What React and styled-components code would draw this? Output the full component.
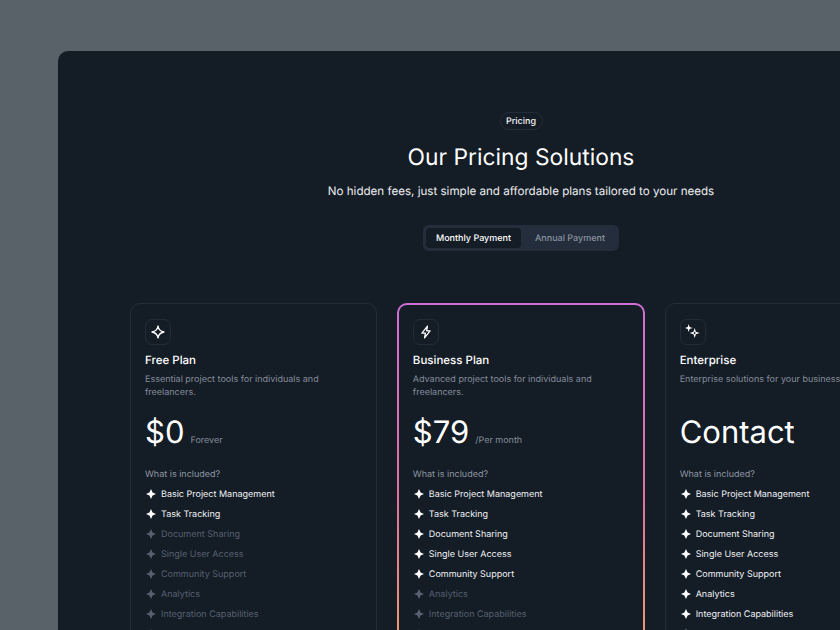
import React from "react";
import styled, { createGlobalStyle } from "styled-components";

const GlobalStyle = createGlobalStyle`
  html, body {
    margin: 0;
    height: 100%;
    overflow: hidden;
    background: #5a6269;
    font-family: "Inter", "Liberation Sans", sans-serif;
    text-rendering: geometricPrecision;
  }
`;

const plans = [
  {
    name: "Free Plan",
    icon: "star",
    desc: "Essential project tools for individuals and freelancers.",
    price: "$0",
    unit: "Forever",
    active: 2,
  },
  {
    name: "Business Plan",
    icon: "zap",
    desc: "Advanced project tools for individuals and freelancers.",
    price: "$79",
    unit: "/Per month",
    active: 5,
    featured: true,
  },
  {
    name: "Enterprise",
    icon: "sparkles",
    desc: "Enterprise solutions for your business needs.",
    price: "Contact",
    active: 8,
  },
];

const features = [
  "Basic Project Management",
  "Task Tracking",
  "Document Sharing",
  "Single User Access",
  "Community Support",
  "Analytics",
  "Integration Capabilities",
  "Priority Support",
];

const PlanIcon = ({ type }) => {
  if (type === "zap") {
    return (
      <svg width="14" height="14" viewBox="0 0 24 24" fill="none" stroke="#fff" strokeWidth="2.2" strokeLinejoin="round">
        <path d="M14.500 2 5 14h6l-1.500 8L19 10h-6l1.500-8z" />
      </svg>
    );
  }
  if (type === "sparkles") {
    return (
      <svg width="16" height="16" viewBox="0 0 24 24" fill="#fff">
        <path d="M5.500 0 6.900 4.600 11.500 6 6.900 7.400 5.500 12 4.100 7.400 -.5 6 4.100 4.600z" />
        <path fillRule="evenodd" d="M14.500 6 16.300 11.700 22 13.500 16.300 15.300 14.500 21 12.700 15.300 7 13.500 12.700 11.700z M14.500 11.400 13.700 12.700 12.400 13.500 13.700 14.300 14.500 15.600 15.300 14.300 16.600 13.500 15.300 12.700z" />
      </svg>
    );
  }
  return (
    <svg width="16" height="16" viewBox="0 0 24 24" fill="none" stroke="#fff" strokeWidth="2" strokeLinejoin="round">
      <path d="M12 3c.8 4.800 4.200 8.200 9 9-4.800.8-8.200 4.200-9 9-.8-4.800-4.200-8.200-9-9 4.800-.8 8.200-4.200 9-9z" />
    </svg>
  );
};

const Bullet = ({ on }) => (
  <svg width="10" height="10" viewBox="0 0 10 10" fill={on ? "#fff" : "#566070"}>
    <path d="M5 0 6.600 3.400 10 5 6.600 6.600 5 10 3.400 6.600 0 5 3.400 3.400z" />
  </svg>
);

const App = () => (
  <Backdrop>
    <GlobalStyle />
    <Panel>
      <Header>
        <Badge>Pricing</Badge>
        <Title>Our Pricing Solutions</Title>
        <Subtitle>No hidden fees, just simple and affordable plans tailored to your needs</Subtitle>
        <Toggle>
          <ToggleOption $selected>Monthly Payment</ToggleOption>
          <ToggleOption>Annual Payment</ToggleOption>
        </Toggle>
      </Header>
      <Cards>
        {plans.map((plan) => (
          <Card key={plan.name} $featured={plan.featured}>
            <IconBox>
              <PlanIcon type={plan.icon} />
            </IconBox>
            <PlanName>{plan.name}</PlanName>
            <PlanDesc>{plan.desc}</PlanDesc>
            <PriceRow>
              <Price>{plan.price}</Price>
              {plan.unit && <Unit>{plan.unit}</Unit>}
            </PriceRow>
            <Included>What is included?</Included>
            <FeatureList>
              {features.map((f, i) => (
                <Feature key={f} $on={i < plan.active}>
                  <Bullet on={i < plan.active} />
                  {f}
                </Feature>
              ))}
            </FeatureList>
          </Card>
        ))}
      </Cards>
    </Panel>
  </Backdrop>
);

const Backdrop = styled.div`
  width: 840px;
  height: 630px;
  overflow: hidden;
  padding: 51px 0 0 58px;
  box-sizing: border-box;
  background: #5a6269;
`;

const Panel = styled.main`
  width: 926px;
  min-height: 700px;
  box-sizing: border-box;
  padding: 61px 72px 40px;
  background: #141c26;
  border-radius: 10px;
`;

const Header = styled.header`
  display: flex;
  flex-direction: column;
  align-items: center;
`;

const Badge = styled.div`
  height: 18px;
  box-sizing: border-box;
  width: 43px;
  display: flex;
  align-items: center;
  justify-content: center;
  font-size: 9px;
  font-weight: 500;
  color: #f4f5f7;
  border: 1px solid #232d3a;
  border-radius: 9px;
`;

const Title = styled.h1`
  margin: 13px 0 0;
  font-size: 22.800px;
  line-height: 30px;
  font-weight: 400;
  color: #fff;
`;

const Subtitle = styled.p`
  margin: 9px 0 0;
  font-size: 11.600px;
  line-height: 18px;
  color: #eceef0;
`;

const Toggle = styled.div`
  display: flex;
  margin-top: 25px;
  padding: 3px;
  background: #232d3b;
  border-radius: 6px;
`;

const ToggleOption = styled.div`
  width: 95px;
  height: 20px;
  box-sizing: border-box;
  padding-left: ${(p) => (p.$selected ? "0" : "3px")};
  display: flex;
  align-items: center;
  justify-content: center;
  font-size: 9px;
  font-weight: 500;
  border-radius: 4px;
  color: ${(p) => (p.$selected ? "#fff" : "#8a93a0")};
  background: ${(p) => (p.$selected ? "#141c26" : "transparent")};
`;

const Cards = styled.section`
  display: grid;
  grid-template-columns: repeat(3, 1fr);
  gap: 20px;
  margin-top: 52px;
`;

const Card = styled.article`
  box-sizing: border-box;
  min-height: 380px;
  padding: ${(p) => (p.$featured ? "14px 13px 14px 13.500px" : "15px 14px")};
  border-radius: 10px;
  border: ${(p) => (p.$featured ? "2px solid transparent" : "1px solid #232d3a")};
  background: ${(p) =>
    p.$featured
      ? "linear-gradient(#141c26, #141c26) padding-box, linear-gradient(180deg, #d06fd6 0%, #e0709f 50%, #f0a860 100%) border-box"
      : "transparent"};
`;

const IconBox = styled.div`
  width: 26px;
  height: 26px;
  box-sizing: border-box;
  display: flex;
  align-items: center;
  justify-content: center;
  border: 1px solid #232d3a;
  border-radius: 7px;
`;

const PlanName = styled.h2`
  margin: 7px 0 0;
  font-size: 11.500px;
  line-height: 16px;
  font-weight: 500;
  color: #fff;
`;

const PlanDesc = styled.p`
  margin: 5px 0 0;
  min-height: 26px;
  font-size: 9px;
  line-height: 13px;
  color: #858d9a;
`;

const PriceRow = styled.div`
  display: flex;
  align-items: baseline;
  gap: 6px;
  margin-top: 14px;
`;

const Price = styled.span`
  font-size: 31px;
  line-height: 40px;
  color: #fff;
`;

const Unit = styled.span`
  font-size: 9px;
  color: #858d9a;
`;

const Included = styled.div`
  margin-top: 15px;
  font-size: 9px;
  line-height: 13px;
  color: #8f97a3;
`;

const FeatureList = styled.ul`
  list-style: none;
  margin: 3px 0 0;
  padding: 0 0 0 1px;
`;

const Feature = styled.li`
  display: flex;
  align-items: center;
  gap: 5px;
  height: 20px;
  font-size: 9px;
  color: ${(p) => (p.$on ? "#f1f3f5" : "#566070")};
`;

export default App;
